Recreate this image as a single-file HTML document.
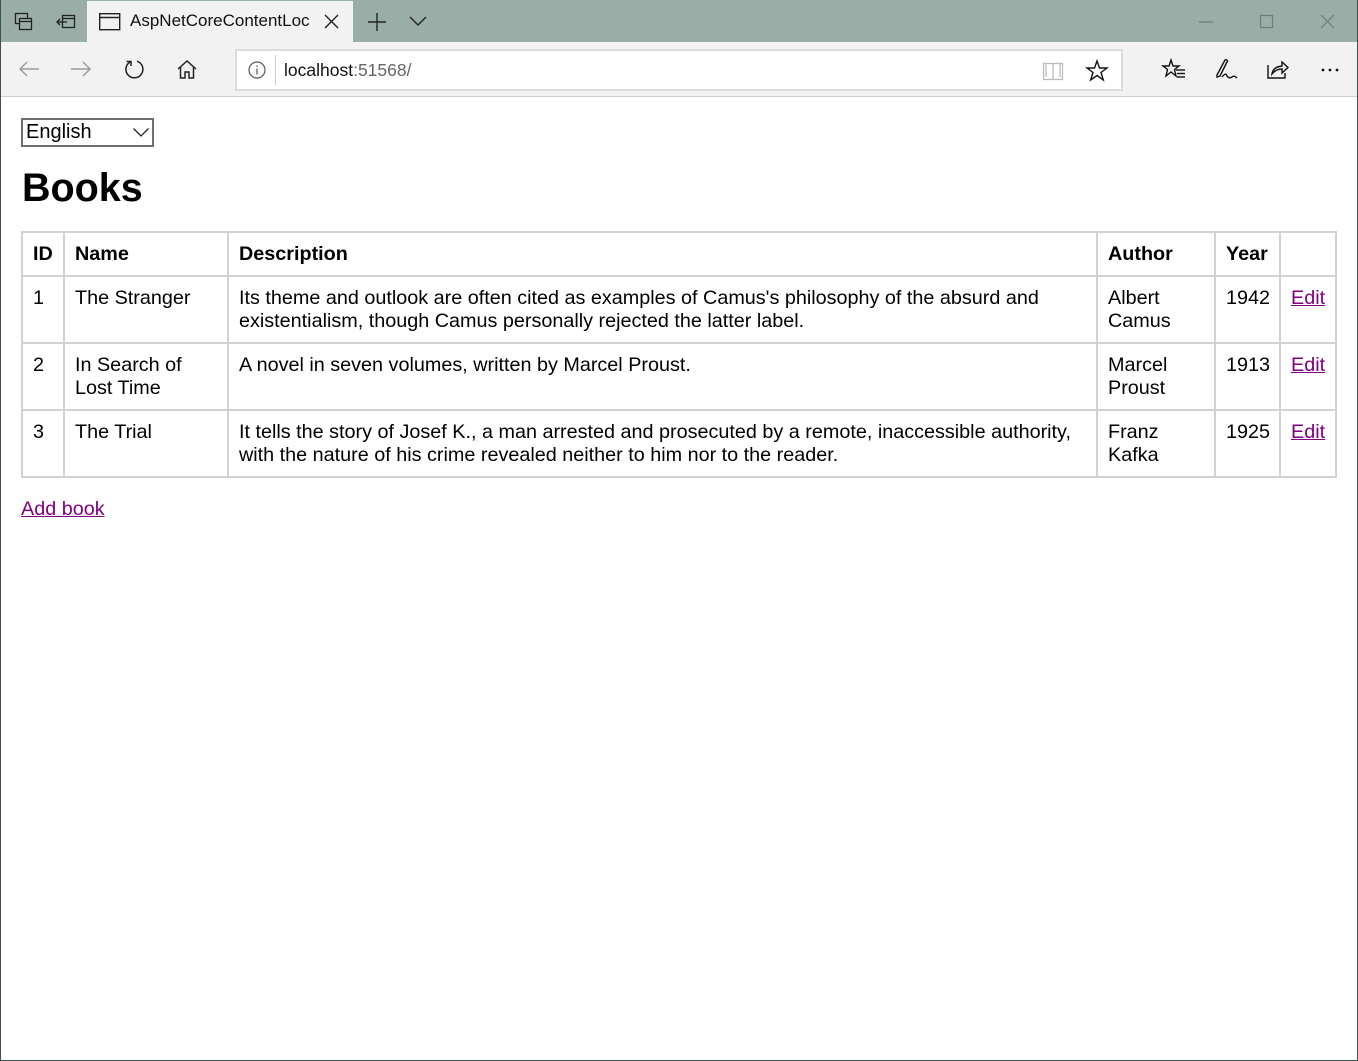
<!DOCTYPE html>
<html><head><meta charset="utf-8"><style>
*{box-sizing:border-box;margin:0;padding:0}
html,body{width:1358px;height:1061px;overflow:hidden;background:#fff;font-family:"Liberation Sans",Arial,sans-serif}
#win{position:absolute;left:0;top:0;width:1358px;height:1061px;border:1px solid #3d5151;border-top:none}
#title{position:absolute;left:0;top:0;width:1356px;height:42px;background:#98aea6}
#tab{position:absolute;left:86px;top:1px;width:266px;height:41px;background:#f2f2f2}
#tool{position:absolute;left:0;top:42px;width:1356px;height:55px;background:#f2f2f2;border-bottom:1px solid #cfcfcf}
#addr{position:absolute;left:234px;top:7px;width:888px;height:42px;background:#fff;border:2px solid #dcdcdc}
.ab{position:absolute}
svg{position:absolute;overflow:visible}
#page{position:absolute;left:-1px;top:97px;width:1356px}
#sel{position:absolute;left:21px;top:21px;width:133px;height:29px;border:2px solid #6e6e6e;font-size:20px;line-height:24px;padding-left:3px;color:#000}
h1{position:absolute;left:22px;top:68px;font-size:39.5px;font-weight:bold;line-height:46px}
table{position:absolute;left:21px;top:134px;border-collapse:collapse;table-layout:fixed;width:1314px;font-size:19.8px;line-height:22.5px;color:#000}
td,th{border:2px solid #d2d2d2;padding:10px 8px 9px 10px;vertical-align:top;text-align:left;overflow:hidden}
th{font-weight:bold;height:44px}
tr.r td{height:67px}
a{color:#800080;text-decoration:underline}
#add{position:absolute;left:21px;top:400px;font-size:19.8px;line-height:24px}
</style></head><body>
<div id="win">
<div id="title">
 <svg style="left:14px;top:13px" width="18" height="18" viewBox="0 0 18 18" fill="none" stroke="#222" stroke-width="1.3"><rect x="0.5" y="0.5" width="12" height="10"/><rect x="4.5" y="5.5" width="12" height="11" fill="#98aea6"/><line x1="4.5" y1="8.5" x2="16.5" y2="8.5"/></svg>
 <svg style="left:55px;top:14px" width="20" height="16" viewBox="0 0 20 16" fill="none" stroke="#222" stroke-width="1.3"><rect x="6.5" y="1.5" width="12" height="12"/><line x1="6.5" y1="4.5" x2="18.5" y2="4.5"/><line x1="1" y1="8" x2="11" y2="8"/><polyline points="4,5 1,8 4,11"/></svg>
 <div id="tab">
  <svg style="left:12px;top:12px" width="22" height="18" viewBox="0 0 22 18" fill="none" stroke="#222" stroke-width="1.4"><rect x="0.7" y="0.7" width="20" height="16"/><line x1="0.7" y1="4.5" x2="20.7" y2="4.5"/></svg>
  <div class="ab" style="left:43px;top:10px;font-size:17px;color:#111;font-family:'Liberation Sans',sans-serif">AspNetCoreContentLoc</div>
  <svg style="left:238px;top:14px" width="13" height="13" viewBox="0 0 13 13" stroke="#222" stroke-width="1.4"><line x1="0" y1="0" x2="13" y2="13"/><line x1="13" y1="0" x2="0" y2="13"/></svg>
 </div>
 <svg style="left:367px;top:13px" width="18" height="18" stroke="#222" stroke-width="1.4"><line x1="9" y1="0" x2="9" y2="18"/><line x1="0" y1="9" x2="18" y2="9"/></svg>
 <svg style="left:409px;top:17px" width="16" height="9" fill="none" stroke="#222" stroke-width="1.4"><polyline points="0,0 8,8 16,0"/></svg>
 <svg style="left:1198px;top:21px" width="14" height="2" stroke="#6a7e78" stroke-width="1.2"><line x1="0" y1="1" x2="14" y2="1"/></svg>
 <svg style="left:1259px;top:15px" width="13" height="13" fill="none" stroke="#6a7e78" stroke-width="1.2"><rect x="0.5" y="0.5" width="12" height="12"/></svg>
 <svg style="left:1320px;top:15px" width="13" height="13" stroke="#6a7e78" stroke-width="1.2"><line x1="0" y1="0" x2="13" y2="13"/><line x1="13" y1="0" x2="0" y2="13"/></svg>
</div>
<div id="tool">
 <svg style="left:18px;top:19px" width="20" height="16" fill="none" stroke="#999" stroke-width="1.4"><line x1="1" y1="8" x2="20" y2="8"/><polyline points="8,1 1,8 8,15"/></svg>
 <svg style="left:70px;top:19px" width="20" height="16" fill="none" stroke="#999" stroke-width="1.4"><line x1="0" y1="8" x2="19" y2="8"/><polyline points="12,1 19,8 12,15"/></svg>
 <svg style="left:123px;top:17px" width="21" height="21" viewBox="0 0 21 21" fill="none" stroke="#222" stroke-width="1.5"><path d="M7 2.5 A8.5 8.5 0 1 0 13 2.2"/><polyline points="7,7 7,2.5 2.5,2.5"/></svg>
 <svg style="left:176px;top:18px" width="20" height="19" viewBox="0 0 20 19" fill="none" stroke="#222" stroke-width="1.5"><polyline points="1,9 10,1 19,9"/><polyline points="3.5,7 3.5,18 8,18 8,12 12,12 12,18 16.5,18 16.5,7"/></svg>
 <div id="addr">
  <svg style="left:11px;top:10px" width="18" height="18" fill="none" stroke="#555" stroke-width="1.2"><circle cx="9" cy="9" r="8"/><line x1="9" y1="7.5" x2="9" y2="13.5"/><line x1="9" y1="4.5" x2="9" y2="6"/></svg>
  <div class="ab" style="left:38px;top:4px;width:1px;height:30px;background:#ccc"></div>
  <div class="ab" style="left:47px;top:9px;font-size:17.5px;color:#111;font-family:'Liberation Sans',sans-serif">localhost<span style="color:#666">:51568/</span></div>
  <svg style="left:806px;top:12px" width="20" height="17" fill="none" stroke="#bbb" stroke-width="1.3"><rect x="0.5" y="0.5" width="19" height="16"/><line x1="10" y1="0.5" x2="10" y2="16.5"/><line x1="3" y1="0.5" x2="3" y2="14"/><line x1="17" y1="0.5" x2="17" y2="14"/></svg>
  <svg style="left:849px;top:9px" width="22" height="21" viewBox="0 0 22 21" fill="none" stroke="#111" stroke-width="1.4"><polygon points="11,1 13.5,8 21,8 15,12.5 17.3,20 11,15.5 4.7,20 7,12.5 1,8 8.5,8"/></svg>
 </div>
 <svg style="left:1161px;top:17px" width="24" height="21" viewBox="0 0 24 21" fill="none" stroke="#111" stroke-width="1.4"><polygon points="9,1 11,7 17,7 12.5,10.5 14,17 9,13 4,17 5.5,10.5 1,7 7,7"/><line x1="14" y1="11" x2="23" y2="11"/><line x1="15" y1="14.5" x2="23" y2="14.5"/><line x1="15" y1="18" x2="23" y2="18"/></svg>
 <svg style="left:1213px;top:16px" width="24" height="24" viewBox="0 0 24 24" fill="none" stroke="#111" stroke-width="1.4"><path d="M3 17 L11 2 Q13 1 13.5 3 L6 18 L3 19 Z"/><path d="M8 19 Q12 14 13 18 Q15 21 18 19 Q20 17 23 20"/></svg>
 <svg style="left:1266px;top:17px" width="22" height="20" viewBox="0 0 22 20" fill="none" stroke="#111" stroke-width="1.4"><polyline points="1,6 1,19 18,19 18,14"/><path d="M5 15 Q6 8 15 7 L15 3 L21 8.5 L15 14 L15 10 Q9 10 5 15 Z"/></svg>
 <svg style="left:1320px;top:26px" width="20" height="4" fill="#111"><circle cx="2" cy="2" r="1.4"/><circle cx="9" cy="2" r="1.4"/><circle cx="16" cy="2" r="1.4"/></svg>
</div>
<div id="page">
 <div id="sel">English<svg style="left:110px;top:8px" width="16" height="9" fill="none" stroke="#222" stroke-width="1.3"><polyline points="0.5,0.5 8,8 15.5,0.5"/></svg></div>
 <h1>Books</h1>
 <table>
  <colgroup><col style="width:42px"><col style="width:164px"><col style="width:869px"><col style="width:118px"><col style="width:65px"><col style="width:56px"></colgroup>
  <tr><th>ID</th><th>Name</th><th>Description</th><th>Author</th><th>Year</th><th></th></tr>
  <tr class="r"><td>1</td><td>The Stranger</td><td>Its theme and outlook are often cited as examples of Camus's philosophy of the absurd and existentialism, though Camus personally rejected the latter label.</td><td>Albert Camus</td><td>1942</td><td><a>Edit</a></td></tr>
  <tr class="r"><td>2</td><td>In Search of Lost Time</td><td>A novel in seven volumes, written by Marcel Proust.</td><td>Marcel Proust</td><td>1913</td><td><a>Edit</a></td></tr>
  <tr class="r"><td>3</td><td>The Trial</td><td>It tells the story of Josef K., a man arrested and prosecuted by a remote, inaccessible authority, with the nature of his crime revealed neither to him nor to the reader.</td><td>Franz Kafka</td><td>1925</td><td><a>Edit</a></td></tr>
 </table>
 <a id="add">Add book</a>
</div>
</div>
</body></html>
